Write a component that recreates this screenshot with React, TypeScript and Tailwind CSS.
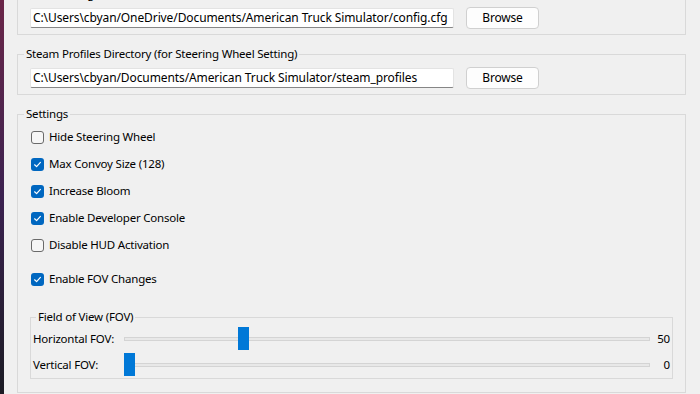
import React from "react";

function PathRow({ value }: { value: string }) {
  return (
    <div className="flex items-center h-[22px]">
      <div className="w-[424px] h-[20px] bg-white border border-[#e3e3e3] border-b-[#868686] rounded-[2px] pl-[2px] flex items-center overflow-hidden whitespace-nowrap text-[12px] tracking-[-0.1px]">
        {value}
      </div>
      <button className="ml-[12px] w-[73px] h-[22px] bg-[#fdfdfd] border border-[#d0d0d0] rounded-[4px] flex items-center justify-center text-[12px]">
        Browse
      </button>
    </div>
  );
}

function Box({
  title,
  className = "",
  children,
}: {
  title: string;
  className?: string;
  children: React.ReactNode;
}) {
  return (
    <fieldset className={`border border-[#d9d9d9] ${className}`}>
      <legend className="ml-[-6px] px-[2px] leading-[16px]">{title}</legend>
      {children}
    </fieldset>
  );
}

function Check({ label, checked }: { label: string; checked: boolean }) {
  return (
    <div className="flex items-center h-[16px] ml-[1px]">
      {checked ? (
        <span className="w-[13px] h-[13px] rounded-[3px] bg-[#0067c0] flex items-center justify-center">
          <svg width="9" height="9" viewBox="0 0 9 9" fill="none">
            <path d="M1.6 4.8 L3.6 6.6 L7.4 2.4" stroke="white" strokeWidth="1.2" strokeLinecap="round" strokeLinejoin="round" />
          </svg>
        </span>
      ) : (
        <span className="w-[13px] h-[13px] rounded-[3px] bg-[#f6f6f6] border border-[#6a6a6a]" />
      )}
      <span className="ml-[5px]">{label}</span>
    </div>
  );
}

function Slider({ label, value, max }: { label: string; value: number; max: number }) {
  const travel = 515;
  return (
    <div className="flex items-center h-[23px]">
      <span className="w-[91px] shrink-0">{label}</span>
      <div className="relative w-[526px] h-[23px] flex items-center">
        <div className="w-full h-[4px] bg-[#e8e8e8] border border-[#d4d4d4]" />
        <div
          className="absolute top-0 w-[11px] h-[23px] bg-[#0078d7]"
          style={{ left: Math.round((value / max) * travel) }}
        />
      </div>
      <span className="flex-1 text-right">{value}</span>
    </div>
  );
}

export default function App() {
  return (
    <div className="w-[700px] h-[394px] overflow-hidden bg-[#f0f0f0] flex text-[11.5px] tracking-[-0.2px] text-black font-['Segoe_UI','Noto_Sans',sans-serif]">
      <div className="w-[4px] shrink-0 bg-gradient-to-b from-[#6b2548] via-[#3b2150] to-[#1b1b24]" />
      <div className="flex-1 pl-[13px] pr-[14px] mt-[-14px]">
        <Box title="Game Config File" className="px-[12px] pt-[5px] pb-[5px]">
          <PathRow value="C:\Users\cbyan/OneDrive/Documents/American Truck Simulator/config.cfg" />
        </Box>
        <Box title="Steam Profiles Directory (for Steering Wheel Setting)" className="mt-[11px] px-[12px] pt-[5px] pb-[5px]">
          <PathRow value="C:\Users\cbyan/Documents/American Truck Simulator/steam_profiles" />
        </Box>
        <Box title="Settings" className="mt-[11px] px-[12px] pt-[7px] pb-[13px]">
          <div className="flex flex-col gap-[11px]">
            <Check label="Hide Steering Wheel" checked={false} />
            <Check label="Max Convoy Size (128)" checked={true} />
            <Check label="Increase Bloom" checked={true} />
            <Check label="Enable Developer Console" checked={true} />
            <Check label="Disable HUD Activation" checked={false} />
          </div>
          <div className="mt-[18px]">
            <Check label="Enable FOV Changes" checked={true} />
          </div>
          <fieldset className="mt-[22px] border border-[#d9d9d9] px-[2px] pt-[2px] pb-[2px]">
            <legend className="ml-[3px] px-[2px] leading-[16px]">Field of View (FOV)</legend>
            <div className="flex flex-col gap-[3px]">
              <Slider label="Horizontal FOV:" value={50} max={226} />
              <Slider label="Vertical FOV:" value={0} max={226} />
            </div>
          </fieldset>
        </Box>
      </div>
    </div>
  );
}
